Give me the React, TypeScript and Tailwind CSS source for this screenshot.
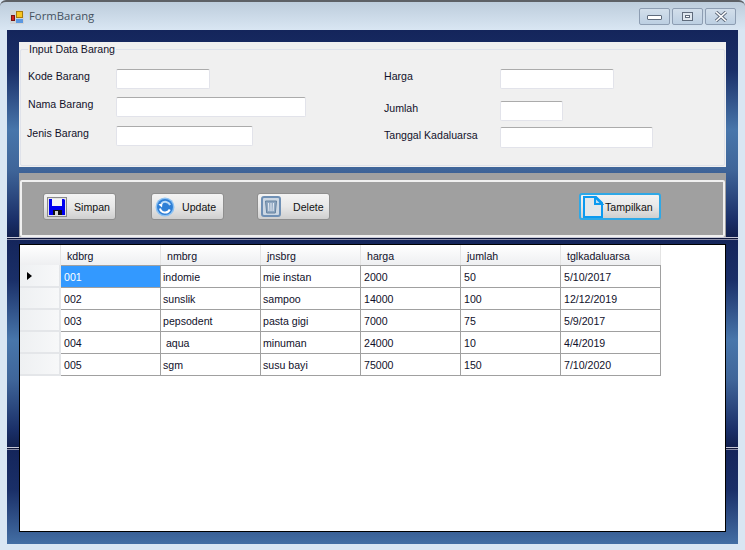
import type { ReactNode } from 'react';

const rows = [
  ['001', 'indomie', 'mie instan', '2000', '50', '5/10/2017'],
  ['002', 'sunslik', 'sampoo', '14000', '100', '12/12/2019'],
  ['003', 'pepsodent', 'pasta gigi', '7000', '75', '5/9/2017'],
  ['004', ' aqua', 'minuman', '24000', '10', '4/4/2019'],
  ['005', 'sgm', 'susu bayi', '75000', '150', '7/10/2020'],
];
const columns = ['kdbrg', 'nmbrg', 'jnsbrg', 'harga', 'jumlah', 'tglkadaluarsa'];

function WindowButton({ children }: { children: ReactNode }) {
  return (
    <div className="flex h-[17px] w-[31px] items-center justify-center rounded-[2px] border border-[#8d9db2] bg-gradient-to-b from-[#d3dfeb] to-[#bccfe2]">
      {children}
    </div>
  );
}

function Field({ width, className }: { width: string; className?: string }) {
  return <div className={`h-[20px] rounded-[2px] border border-[#e2e3ea] border-t-[#ababab] bg-white ${width} ${className ?? ''}`} />;
}

function ActionButton({ icon, label, gap }: { icon: ReactNode; label: string; gap: string }) {
  return (
    <button className="flex h-[27px] w-[73px] items-center rounded-[3px] border border-[#8e8e8e] bg-gradient-to-b from-[#f3f3f3] via-[#e8e8e8] to-[#cfcfcf] pl-[3px] text-[#111]">
      {icon}
      <span className={gap}>{label}</span>
    </button>
  );
}

function FloppyIcon() {
  return (
    <svg width="20" height="20" viewBox="0 0 20 20">
      <rect x="0.5" y="0.5" width="19" height="19" fill="#e4e4e4" stroke="#8a8a8a" />
      <path d="M2 2h15l1 1v15H2z" fill="#0000f0" />
      <rect x="5" y="2" width="10" height="7" fill="#f4f4f4" />
      <rect x="6" y="13" width="9" height="5" fill="#111" />
      <rect x="8" y="14" width="3" height="4" fill="#d8d8d8" />
    </svg>
  );
}

function RefreshIcon() {
  return (
    <svg width="20" height="20" viewBox="0 0 20 20">
      <circle cx="10" cy="10" r="9.5" fill="#8dc2f2" />
      <circle cx="10" cy="10" r="8" fill="#2f7fd6" />
      <path d="M5 11.5a5.2 5.2 0 0 0 9.8 1" fill="none" stroke="#fff" strokeWidth="2" />
      <path d="M6.5 6.5a5.2 5.2 0 0 1 8.6 1.5" fill="none" stroke="#bcdcf8" strokeWidth="2" />
      <path d="M3.5 7.5l4-1.6-.5 4.6z" fill="#fff" />
    </svg>
  );
}

function TrashIcon() {
  return (
    <svg width="20" height="21" viewBox="0 0 20 21">
      <rect x="1" y="1" width="18" height="19" rx="2" fill="#ccd7e3" stroke="#6f90b5" strokeWidth="2" />
      <path d="M4.5 5h11l-1.2 12H5.7z" fill="#8fa7c1" stroke="#64829f" />
      <path d="M7.5 7l.4 8M10 7v8M12.5 7l-.4 8" stroke="#e3eaf2" strokeWidth="1.1" />
    </svg>
  );
}

function DocumentIcon() {
  return (
    <svg width="22" height="22" viewBox="0 0 22 22">
      <path d="M2 1h12l6 6v14H2z" fill="#e3e7ea" stroke="#0b9af0" strokeWidth="2" />
      <path d="M13 1v7h7z" fill="#bfe0f7" stroke="#0b9af0" strokeWidth="2" />
    </svg>
  );
}

export default function App() {
  return (
    <div className="relative h-[550px] w-[745px] overflow-hidden bg-[#d9e6f3] font-['Liberation_Sans',sans-serif] text-[10.6px] leading-[14px] text-[#10102a]">
      {/* Title bar */}
      <div className="flex h-[30px] items-center rounded-t-[6px] border-t-2 border-[#5d6166] bg-gradient-to-b from-[#bdcddc] to-[#d9e6f3] pr-[9px] pl-[10px]">
        <svg width="14" height="14" viewBox="0 0 14 14" className="mt-[1px]">
          <rect x="0" y="0" width="14" height="14" fill="#cfd3d6" />
          <rect x="6.5" y="1.5" width="6" height="6" fill="#f7c51e" stroke="#a87a0a" />
          <rect x="1.5" y="5.5" width="3" height="5" fill="#d4211d" stroke="#7c1512" />
          <rect x="6" y="9" width="7" height="4" fill="#5b97e0" />
        </svg>
        <span className="ml-[5px] font-['Open_Sans',sans-serif] text-[11.3px] text-[#46525f]">FormBarang</span>
        <div className="ml-auto flex gap-[2px]">
          <WindowButton>
            <div className="mt-[3px] h-[5px] w-[15px] rounded-[1px] border border-[#5f6b7c] bg-white" />
          </WindowButton>
          <WindowButton>
            <div className="flex h-[9px] w-[11px] items-center justify-center border border-[#5f6b7c] bg-[#dfe7ef]">
              <div className="h-[3px] w-[5px] border border-[#5f6b7c] bg-white" />
            </div>
          </WindowButton>
          <WindowButton>
            <svg width="14" height="11" viewBox="0 0 14 11">
              <path d="M2 1l10 9M12 1L2 10" stroke="#5f6b7c" strokeWidth="3.4" />
              <path d="M2 1l10 9M12 1L2 10" stroke="#fff" strokeWidth="1.6" />
            </svg>
          </WindowButton>
        </div>
      </div>

      {/* Client area */}
      <div className="mx-[7px] flex h-[514px] flex-col bg-[repeating-linear-gradient(180deg,#14255b_0px,#1a2f68_40px,#4876ab_100px,#3f6599_140px,#1a2f68_190px,#11204f_207px,#c9cad8_207px,#c9cad8_208px,#0c1438_208px,#0c1438_209px,#8a8da6_209px,#8a8da6_210px)] px-[12px] pt-[12px] pb-[12px]">
        {/* Input group */}
        <div className="h-[125px] bg-[#f0f0f0] px-[1px] pt-[1px] pb-[1px]">
          <div className="relative mt-[6px] h-[117px] rounded-[2px] border border-[#dfe2ea] bg-[#f0f0f0]">
            <span className="absolute top-[-8px] left-[7px] bg-[#f0f0f0] px-[1px]">Input Data Barang</span>
            <div className="grid h-full grid-cols-[363px_1fr]">
              <div className="grid grid-cols-[88px_auto] content-start items-start pt-[19px] pl-[7px]">
                <span>Kode Barang</span>
                <Field width="w-[94px]" />
                <span className="mt-[8px]">Nama Barang</span>
                <Field width="w-[190px]" className="mt-[8px]" />
                <span className="mt-[9px] -ml-[1px]">Jenis Barang</span>
                <Field width="w-[137px]" className="mt-[9px]" />
              </div>
              <div className="grid grid-cols-[116px_auto] content-start items-start pt-[19px]">
                <span>Harga</span>
                <Field width="w-[114px]" />
                <span className="mt-[12px]">Jumlah</span>
                <Field width="w-[63px]" className="mt-[12px]" />
                <span className="mt-[7px]">Tanggal Kadaluarsa</span>
                <Field width="w-[153px]" className="mt-[6px] h-[21px]" />
              </div>
            </div>
          </div>
        </div>

        {/* Button panel */}
        <div className="mt-[6px] h-[64px] bg-[#a0a0a0] px-[1px] pt-[7px]">
          <div className="flex h-[57px] items-start rounded-[2px] border-2 border-[#f0f0f0] pt-[11px] pl-[21px]">
            <ActionButton icon={<FloppyIcon />} label="Simpan" gap="ml-[7px]" />
            <div className="ml-[35px]">
              <ActionButton icon={<RefreshIcon />} label="Update" gap="ml-[7px]" />
            </div>
            <div className="ml-[33px]">
              <ActionButton icon={<TrashIcon />} label="Delete" gap="ml-[12px]" />
            </div>
            <button className="ml-[249px] flex h-[27px] w-[82px] items-center rounded-[3px] border-2 border-[#2fa8e6] bg-gradient-to-b from-[#f3f3f3] via-[#e8e8e8] to-[#cfcfcf] pl-[1px] text-[#111]">
              <DocumentIcon />
              <span className="ml-[1px]">Tampilkan</span>
            </button>
          </div>
        </div>

        {/* Data grid */}
        <div className="mt-[7px] h-[289px] border border-black bg-white">
          <div className="grid w-[641px] grid-cols-[41px_repeat(6,100px)]">
            <div className="h-[20px] border-r border-[#e4e4e4] bg-gradient-to-b from-white to-[#eeeff1]" />
            {columns.map((c) => (
              <div key={c} className="h-[20px] border-r border-[#e4e4e4] bg-gradient-to-b from-white to-[#eeeff1] pt-[4px] pl-[6px]">
                {c}
              </div>
            ))}
            {rows.map((row, i) => (
              <div key={row[0]} className="contents">
                <div className={`flex items-center border-r-2 border-b-2 border-[#e4e6e9] bg-gradient-to-r from-[#eef0f2] to-[#f7f8f9] pl-[7px] ${i === 0 ? 'h-[23px]' : 'h-[22px]'}`}>
                  {i === 0 && <div className="h-0 w-0 border-y-[4px] border-l-[5px] border-y-transparent border-l-black" />}
                </div>
                {row.map((cell, j) => (
                  <div
                    key={j}
                    className={`whitespace-pre border-r border-b border-[#a0a0a0] ${j === 1 || j === 2 ? 'pl-[2px]' : 'pl-[3px]'} ${i === 0 ? 'h-[23px] border-t pt-[4px]' : 'h-[22px] pt-[4px]'} ${i === 0 && j === 0 ? 'bg-[#3399ff] text-white' : ''}`}
                  >
                    {cell}
                  </div>
                ))}
              </div>
            ))}
          </div>
        </div>
      </div>
    </div>
  );
}
